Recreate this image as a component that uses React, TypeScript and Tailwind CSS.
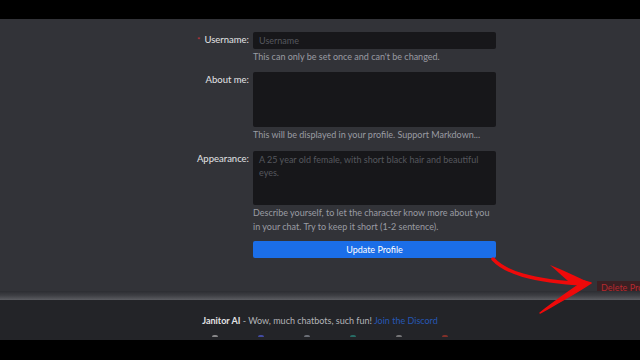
import React from 'react';

const font = { fontFamily: 'Lato, "Noto Sans", sans-serif' };

function Row({ label, required, children }: { label: string; required?: boolean; children: React.ReactNode }) {
  return (
    <div className="grid grid-cols-[249px_243px] gap-x-[4px]">
      <div className="text-right text-[9.5px] leading-[16px] text-[#e2e3e6]">
        {required && <span className="text-[#c2343b] mr-[4px] text-[8px]">*</span>}
        {label}
      </div>
      <div>{children}</div>
    </div>
  );
}

export default function App() {
  return (
    <div className="w-[640px] h-[360px] overflow-hidden bg-black flex flex-col relative" style={font}>
      <div className="h-[19px] bg-black shrink-0" />
      <div className="h-[272px] bg-[#323338] pt-[13px] shrink-0">
        <Row label="Username:" required>
          <input
            placeholder="Username"
            className="block w-full h-[17px] rounded-[2px] bg-[#17171a] px-[6px] text-[9px] text-[#ddd] placeholder:text-[#56585e] outline-none"
          />
          <p className="mt-[1px] text-[9px] leading-[14px] text-[#9a9ca3]">This can only be set once and can't be changed.</p>
        </Row>
        <div className="mt-[8px]">
          <Row label="About me:">
            <textarea className="block w-full h-[55px] rounded-[2px] bg-[#17171a] resize-none outline-none" />
            <p className="mt-[1px] text-[9px] leading-[14px] text-[#9a9ca3]">This will be displayed in your profile. Support Markdown...</p>
          </Row>
        </div>
        <div className="mt-[9px]">
          <Row label="Appearance:">
            <textarea
              placeholder="A 25 year old female, with short black hair and beautiful eyes."
              className="block w-full h-[54px] rounded-[2px] bg-[#17171a] resize-none outline-none px-[6px] py-[2px] text-[9px] leading-[13px] placeholder:text-[#56585e]"
            />
            <p className="mt-[1px] text-[9px] leading-[14px] text-[#9a9ca3]">
              Describe yourself, to let the character know more about you in your chat. Try to keep it short (1-2 sentence).
            </p>
            <button className="block mt-[7px] w-full h-[17px] rounded-[2px] bg-[#1b6ee8] text-white text-[9px] leading-[17px]">
              Update Profile
            </button>
          </Row>
        </div>
        <div className="mt-[23px] ml-[597px] w-max h-[13px] bg-[#3a2023] px-[4px] text-[9px] leading-[13px] text-[#b52a30] whitespace-nowrap">
          Delete Profile
        </div>
      </div>
      <div className="h-[9px] shrink-0 bg-gradient-to-b from-[#2c2d32] via-[#3e3f44] to-[#5c5d62]" />
      <div className="h-[40px] shrink-0 bg-[#232428] flex flex-col items-center">
        <p className="mt-[15px] text-[9px] leading-[12px] text-[#b3b4b8]">
          <span className="font-bold text-[#e2e2e4]">Janitor AI</span> - Wow, much chatbots, such fun!{' '}
          <span className="text-[#2557b5]">Join the Discord</span>
        </p>
        <div className="mt-[8px] flex gap-[40px] pl-[20px] opacity-60">
          <span className="w-[6px] h-[2px] rounded-t bg-[#c9c9c9]" />
          <span className="w-[6px] h-[2px] rounded-t bg-[#5865f2]" />
          <span className="w-[6px] h-[2px] rounded-t bg-[#9aa0aa]" />
          <span className="w-[6px] h-[2px] rounded-t bg-[#2a9d8f]" />
          <span className="w-[6px] h-[2px] rounded-t bg-[#aaa]" />
          <span className="w-[6px] h-[2px] rounded-t bg-[#c0392b]" />
        </div>
      </div>
      <div className="flex-1 bg-black" />
      <svg className="absolute left-0 top-0 pointer-events-none" width="640" height="360" viewBox="0 0 640 360">
        <path d="M493 259 C505 272 530 281 585 284" stroke="#ee0a0a" strokeWidth="3.5" fill="none" strokeLinecap="round" />
        <path d="M550 265 C565 271 578 277 592 284 L572 285 C566 279 558 272 550 265 Z" fill="#ee0a0a" />
        <path d="M591 283 C575 294 556 304 540 313 C555 301 570 291 584 281 Z" fill="#ee0a0a" stroke="#ee0a0a" strokeWidth="1.5" strokeLinejoin="round" />
      </svg>
    </div>
  );
}
